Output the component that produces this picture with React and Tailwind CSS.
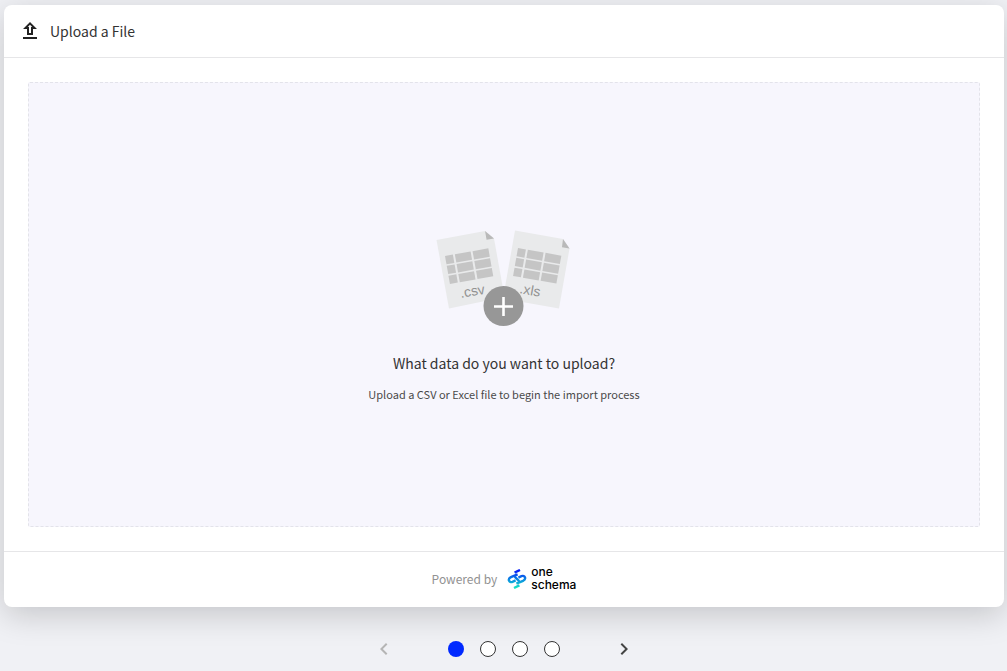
import { MdOutlineUpload, MdChevronLeft, MdChevronRight } from 'react-icons/md'

const STEPS = ['Upload', 'Select header', 'Map columns', 'Review']

const COLS = [[0, 8], [10, 16], [28, 16]]
const ROWS = [0, 10, 20]

function SheetGrid({ transform }) {
  return (
    <g transform={transform} fill="#c5c5c5">
      {ROWS.map(y => COLS.map(([x, w]) => (
        <rect key={`${x}-${y}`} x={x} y={y} width={w} height={8.4} />
      )))}
    </g>
  )
}

function FilesArt() {
  return (
    <svg width="136" height="98" viewBox="0 0 136 98" aria-hidden="true" className="font-['Liberation_Sans',sans-serif] text-[14px]">
      {/* csv sheet */}
      <path d="M0.5 10 L49 1 L58 8.5 L68.5 67 L13 78.5 Z" fill="#e9eaeb" />
      <path d="M49 1 L58 8.5 L50.6 9.8 Z" fill="#b9b9b9" />
      <SheetGrid transform="translate(9 26) rotate(-10)" />
      <text transform="translate(25 68) rotate(-10)" fill="#929292">.csv</text>

      {/* xls sheet */}
      <path d="M79 0.5 L127 9 L133.5 18.5 L123 78.5 L67 68.5 Z" fill="#e9eaeb" />
      <path d="M127 9 L133.5 18.5 L126 17.2 Z" fill="#b9b9b9" />
      <SheetGrid transform="translate(82 18) rotate(10)" />
      <text transform="translate(83 63) rotate(10)" fill="#929292">.xls</text>

      <circle cx="67.5" cy="76" r="20" fill="#979797" />
      <path d="M67.5 67 V86 M58 76.5 H77" stroke="#fff" strokeWidth="2.6" />
    </svg>
  )
}

function LogoMark() {
  return (
    <svg width="20" height="20" viewBox="0 0 20 20" fill="none" aria-hidden="true">
      <defs>
        <linearGradient id="mark" x1="10" y1="0" x2="10" y2="20" gradientUnits="userSpaceOnUse">
          <stop offset="0.1" stopColor="#0a1ef5" />
          <stop offset="0.5" stopColor="#0a84e4" />
          <stop offset="1" stopColor="#19f0c0" />
        </linearGradient>
      </defs>
      <g stroke="url(#mark)" strokeWidth="2.4">
        <path d="M7.6 3.6 L13 1" />
        <path d="M10.6 5.4 L4 8.2 C0.2 10 2 14.2 5.5 12.8 L8.6 11.4" />
        <path d="M9.4 14.6 L16 11.8 C19.8 10 18 5.8 14.5 7.2 L11.4 8.6" />
        <path d="M7.8 7.2 C8 9.6 12 10.4 12.2 12.8" />
        <path d="M7 19 L12.4 16.4" />
      </g>
    </svg>
  )
}

export default function App() {
  return (
    <div className="flex min-h-screen flex-col bg-[#f0f1f5] pt-[5px] pr-[3px] pl-1 font-['Noto_Sans_CJK_SC',sans-serif] text-[#333]">
      <main className="flex flex-1 flex-col rounded-lg bg-white shadow-[0_8px_32px_rgba(0,0,0,0.18)]">
        <header className="flex h-[53px] items-center gap-2 border-b border-[#e6e6e8] px-3.5">
          <MdOutlineUpload size={24} className="text-[#222]" />
          <h1 className="text-sm">Upload a File</h1>
        </header>

        <div className="flex flex-1 flex-col p-6">
          <button type="button" className="flex flex-1 flex-col items-center justify-center rounded-xs border border-dashed border-[#e3e3ea] bg-[#f7f6fd] pt-[22px]">
            <FilesArt />
            <span className="mt-6 text-sm leading-[22px]">What data do you want to upload?</span>
            <span className="mt-3 text-[11px] leading-4 text-[#4a4a4a]">Upload a CSV or Excel file to begin the import process</span>
          </button>
        </div>

        <footer className="flex h-14 items-center justify-center gap-2.5 border-t border-[#e6e6e8] pb-0.5 text-xs text-[#929292]">
          Powered by
          <a href="#oneschema" className="flex items-center gap-1 text-black">
            <LogoMark />
            <span className="flex flex-col pb-0.5 font-[Inter,sans-serif] text-xs leading-[13px] font-medium">
              <span>one</span>
              <span>schema</span>
            </span>
          </a>
        </footer>
      </main>

      <nav aria-label="Steps" className="flex h-16 items-center justify-center gap-[52px] pt-5">
        <button type="button" aria-label="Previous" disabled className="text-[#b5b5b5]">
          <MdChevronLeft size={24} />
        </button>
        <div className="flex gap-4">
          {STEPS.map((step, i) => (
            <button
              key={step}
              type="button"
              aria-label={step}
              className={i === 0 ? 'size-4 rounded-full bg-[#0029ff]' : 'size-4 rounded-full border border-[#333] bg-white'}
            />
          ))}
        </div>
        <button type="button" aria-label="Next" className="text-[#444]">
          <MdChevronRight size={24} />
        </button>
      </nav>
    </div>
  )
}
